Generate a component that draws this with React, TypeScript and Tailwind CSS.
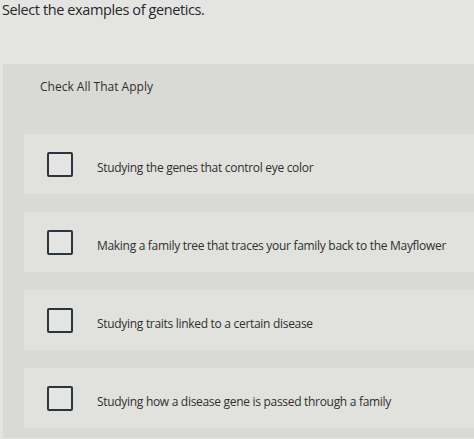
import React from 'react';

const options = [
  'Studying the genes that control eye color',
  'Making a family tree that traces your family back to the Mayflower',
  'Studying traits linked to a certain disease',
  'Studying how a disease gene is passed through a family',
];

export default function App() {
  return (
    <div
      className="w-[474px] h-[439px] overflow-hidden bg-[#e4e5e2] text-[#2e2f30]"
      style={{ fontFamily: '"Open Sans", Lato, sans-serif' }}
    >
      <h1 className="pl-[2px] pt-[1px] text-[14.5px] leading-[18px] tracking-[-0.4px] font-normal text-[#26282a]">
        Select the examples of genetics.
      </h1>

      {/* Question panel */}
      <div className="mt-[45px] ml-[3px] bg-[#d9dad6] pb-[10px]">
        <div className="h-[44px] flex items-center pl-[37px] pt-[2px] text-[12px]">
          Check All That Apply
        </div>
        <div className="mt-[26px] ml-[21px] flex flex-col gap-[18px]">
          {options.map((text) => (
            <label key={text} className="h-[60px] bg-[#e1e2de] flex items-center gap-[24px] pl-[23px] text-[12px] tracking-[-0.3px]">
              <span className="w-[26px] h-[25px] shrink-0 rounded-[2px] border-2 border-[#2b3540] bg-[#e4e5e2]" />
              <span className="pt-[8px] whitespace-nowrap">{text}</span>
            </label>
          ))}
        </div>
      </div>
    </div>
  );
}
